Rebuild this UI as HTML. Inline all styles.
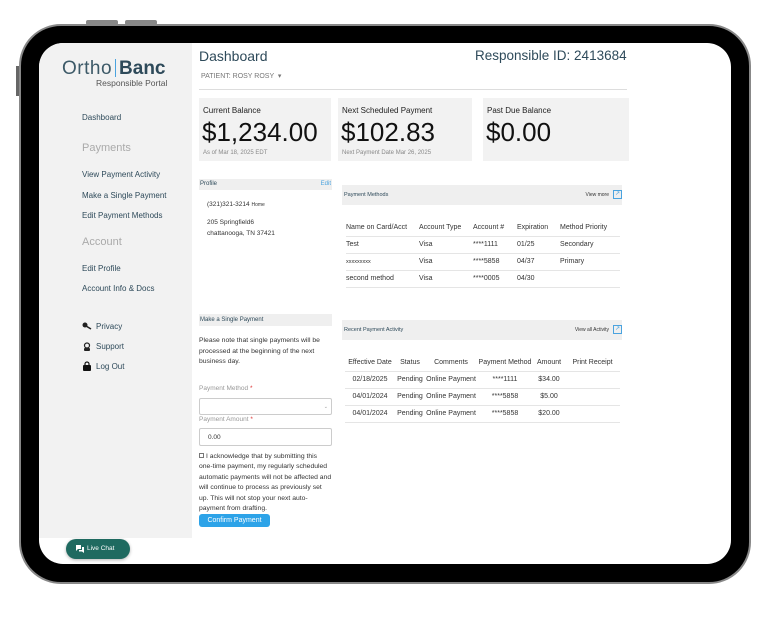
<!DOCTYPE html>
<html><head><style>
*{box-sizing:border-box;margin:0;padding:0}
body{width:768px;height:620px;background:#fff;font-family:"Liberation Sans",sans-serif;position:relative;overflow:hidden;color:#333}
.abs{position:absolute}
.dev{left:19px;top:24px;width:732px;height:560px;border-radius:42px;background:#000;border:2px solid #888}
.scr{left:39px;top:43px;width:692px;height:521px;border-radius:24px;background:#fff;overflow:hidden}
.side{left:0;top:0;width:153px;height:495px;background:#f2f2f2}
.nav{font-size:8px;color:#2e4a5a}
.hdr{font-size:11px;color:#aaa}
.card{background:#f2f2f2}
.t{font-size:7px;color:#333}
table{border-collapse:collapse;font-size:7px}
td{height:17px;border-bottom:1px solid #e5e5e5}
th{font-weight:normal;text-align:left;height:17px;border-bottom:1px solid #e5e5e5}
.bar{background:#efefef;font-size:6px;color:#2e4a5a}
.ico{display:inline-block;width:9px;height:9px;border:1px solid #4aa3df;vertical-align:middle;margin-left:4px;font-size:6px;color:#4aa3df;line-height:7px;text-align:center}
</style></head><body>
<div class="abs" style="left:86px;top:20px;width:32px;height:5px;background:#888;border-radius:2px"></div>
<div class="abs" style="left:125px;top:20px;width:32px;height:5px;background:#888;border-radius:2px"></div>
<div class="abs" style="left:16px;top:66px;width:4px;height:30px;background:#666"></div>
<div class="abs dev"></div>
<div class="abs scr">
 <div class="abs side">
  <div class="abs" style="left:23px;top:15px;font-size:19px;color:#2e4a5a;white-space:nowrap"><span style="color:#3d5a68;letter-spacing:.5px">Ortho</span><span style="display:inline-block;width:1px;height:18px;background:#4aa3df;margin:0 3px;vertical-align:-3px"></span><b>Banc</b></div>
  <div class="abs" style="left:57px;top:35px;font-size:8.5px;color:#555">Responsible Portal</div>
  <div class="abs nav" style="left:43px;top:70px">Dashboard</div>
  <div class="abs hdr" style="left:43px;top:99px">Payments</div>
  <div class="abs nav" style="left:43px;top:127px">View Payment Activity</div>
  <div class="abs nav" style="left:43px;top:148px">Make a Single Payment</div>
  <div class="abs nav" style="left:43px;top:168px">Edit Payment Methods</div>
  <div class="abs hdr" style="left:43px;top:193px">Account</div>
  <div class="abs nav" style="left:43px;top:221px">Edit Profile</div>
  <div class="abs nav" style="left:43px;top:241px">Account Info &amp; Docs</div>
  <svg class="abs" style="left:43px;top:279px" width="10" height="8" viewBox="0 0 10 8"><circle cx="3" cy="3" r="2.5" fill="#222"/><path d="M4 4L9 7" stroke="#222" stroke-width="1.5"/></svg>
  <div class="abs nav" style="left:57px;top:279px">Privacy</div>
  <svg class="abs" style="left:44px;top:299px" width="8" height="9" viewBox="0 0 8 9"><circle cx="4" cy="3.5" r="2.5" fill="none" stroke="#222" stroke-width="1.2"/><rect x="1" y="6" width="6" height="3" rx="1" fill="#222"/></svg>
  <div class="abs nav" style="left:57px;top:299px">Support</div>
  <svg class="abs" style="left:44px;top:318px" width="8" height="10" viewBox="0 0 8 10"><path d="M2 4V3a2 2 0 0 1 4 0v1" fill="none" stroke="#111" stroke-width="1.2"/><rect x="0" y="4" width="8" height="6" rx="1" fill="#111"/></svg>
  <div class="abs nav" style="left:57px;top:319px">Log Out</div>
 </div>
 <div class="abs" style="left:27px;top:496px;width:64px;height:20px;border-radius:10px;background:#1f6a60;color:#fff;font-size:6.5px;line-height:20px;padding-left:21px;box-shadow:0 1px 3px rgba(0,0,0,.3)">Live Chat</div>
 <svg class="abs" style="left:37px;top:502px" width="8" height="8" viewBox="0 0 8 8"><path d="M0 0h5v4H2L0 6z" fill="#fff"/><path d="M6 2h2v6L6 6.5H3V5h3z" fill="#fff"/></svg>

 <div class="abs" style="left:160px;top:5px;font-size:14px;color:#2e4a5a">Dashboard</div>
 <div class="abs" style="left:436px;top:5px;font-size:13.5px;color:#2e4a5a">Responsible ID: 2413684</div>
 <div class="abs" style="left:162px;top:29px;font-size:7px;color:#777">PATIENT: ROSY ROSY &nbsp;▾</div>
 <div class="abs" style="left:160px;top:46px;width:428px;height:1px;background:#ddd"></div>

 <div class="abs card" style="left:160px;top:55px;width:132px;height:63px"></div>
 <div class="abs" style="left:164px;top:63px;font-size:8px;color:#222">Current Balance</div>
 <div class="abs" style="left:163px;top:74px;font-size:26px;color:#111">$1,234.00</div>
 <div class="abs" style="left:164px;top:107px;font-size:6px;color:#888">As of Mar 18, 2025 EDT</div>
 <div class="abs card" style="left:299px;top:55px;width:134px;height:63px"></div>
 <div class="abs" style="left:303px;top:63px;font-size:8px;color:#222">Next Scheduled Payment</div>
 <div class="abs" style="left:302px;top:74px;font-size:26px;color:#111">$102.83</div>
 <div class="abs" style="left:303px;top:107px;font-size:6px;color:#888">Next Payment Date Mar 26, 2025</div>
 <div class="abs card" style="left:444px;top:55px;width:146px;height:63px"></div>
 <div class="abs" style="left:448px;top:63px;font-size:8px;color:#222">Past Due Balance</div>
 <div class="abs" style="left:447px;top:74px;font-size:26px;color:#111">$0.00</div>

 <div class="abs bar" style="left:160px;top:136px;width:133px;height:11px;line-height:11px;padding-left:1px">Profile<span style="float:right;color:#4aa3df;padding-right:1px">Edit</span></div>
 <div class="abs t" style="left:168px;top:158px;font-size:6.5px">(321)321-3214 <span style="font-size:5px">Home</span></div>
 <div class="abs t" style="left:168px;top:174px;font-size:6.5px;line-height:11px">205 Springfield6<br>chattanooga, TN 37421</div>

 <div class="abs bar" style="left:303px;top:142px;width:280px;height:20px;line-height:20px;padding-left:2px;font-size:5.5px">Payment Methods<span style="float:right;color:#333;font-size:5px">View more<span class="ico">↗</span></span></div>
 <table class="abs" style="left:307px;top:176px;width:274px"><tr><th style="width:73px">Name on Card/Acct</th><th style="width:54px">Account Type</th><th style="width:44px">Account #</th><th style="width:43px">Expiration</th><th>Method Priority</th></tr>
 <tr><td>Test</td><td>Visa</td><td>****1111</td><td>01/25</td><td>Secondary</td></tr>
 <tr><td style="font-size:5.5px">xxxxxxxxx</td><td>Visa</td><td>****5858</td><td>04/37</td><td>Primary</td></tr>
 <tr><td>second method</td><td>Visa</td><td>****0005</td><td>04/30</td><td></td></tr></table>

 <div class="abs bar" style="left:160px;top:271px;width:133px;height:12px;line-height:12px;padding-left:1px">Make a Single Payment</div>
 <div class="abs t" style="left:160px;top:293px;font-size:6.8px;line-height:10.5px;width:135px">Please note that single payments will be processed at the beginning of the next business day.</div>
 <div class="abs" style="left:160px;top:342px;font-size:6.5px;color:#999">Payment Method <span style="color:#d33">*</span></div>
 <div class="abs" style="left:160px;top:355px;width:133px;height:17px;border:1px solid #ccc;border-radius:2px;font-size:5px;text-align:right;padding:5px 3px;color:#999">⌄</div>
 <div class="abs" style="left:160px;top:373px;font-size:6.5px;color:#999">Payment Amount <span style="color:#d33">*</span></div>
 <div class="abs" style="left:160px;top:385px;width:133px;height:18px;border:1px solid #ccc;border-radius:2px;font-size:6.5px;padding:5px 8px;color:#333">0.00</div>
 <div class="abs t" style="left:160px;top:409px;font-size:6.8px;line-height:10.4px;width:133px"><span style="display:inline-block;width:5px;height:5px;border:1px solid #777;margin-right:2px"></span>I acknowledge that by submitting this one-time payment, my regularly scheduled automatic payments will not be affected and will continue to process as previously set up. This will not stop your next auto-payment from drafting.</div>
 <div class="abs" style="left:160px;top:471px;width:71px;height:13px;border-radius:3px;background:#2da3e8;color:#fff;font-size:7px;line-height:13px;text-align:center">Confirm Payment</div>

 <div class="abs bar" style="left:303px;top:277px;width:280px;height:20px;line-height:20px;padding-left:2px;font-size:5.5px">Recent Payment Activity<span style="float:right;color:#333;font-size:5px">View all Activity<span class="ico">↗</span></span></div>
 <table class="abs" style="left:306px;top:311px;width:275px;text-align:center"><tr><th style="text-align:center;width:50px">Effective Date</th><th style="text-align:center;width:30px">Status</th><th style="text-align:center;width:52px">Comments</th><th style="text-align:center;width:56px">Payment Method</th><th style="text-align:center;width:32px">Amount</th><th style="text-align:center">Print Receipt</th></tr>
 <tr><td>02/18/2025</td><td>Pending</td><td>Online Payment</td><td>****1111</td><td>$34.00</td><td></td></tr>
 <tr><td>04/01/2024</td><td>Pending</td><td>Online Payment</td><td>****5858</td><td>$5.00</td><td></td></tr>
 <tr><td>04/01/2024</td><td>Pending</td><td>Online Payment</td><td>****5858</td><td>$20.00</td><td></td></tr></table>
</div>
</body></html>
